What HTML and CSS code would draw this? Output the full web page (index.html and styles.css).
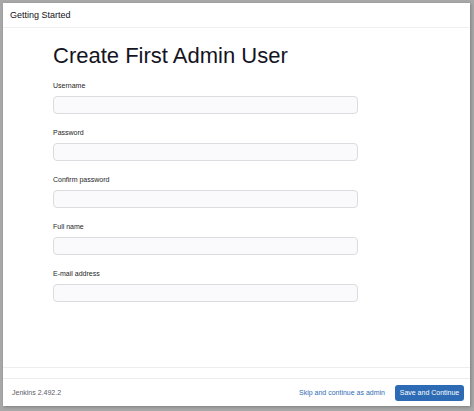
FILE: index.html
```html
<!DOCTYPE html>
<html>
<head>
<meta charset="utf-8">
<link rel="stylesheet" href="styles.css">
</head>
<body>
<div class="dialog">
  <div class="header">Getting Started</div>
  <div class="content">
    <h1 class="title">Create First Admin User</h1>
    <div class="field">
      <label class="label">Username</label>
      <input class="input" type="text">
    </div>
    <div class="field">
      <label class="label">Password</label>
      <input class="input" type="password">
    </div>
    <div class="field">
      <label class="label">Confirm password</label>
      <input class="input" type="password">
    </div>
    <div class="field">
      <label class="label">Full name</label>
      <input class="input" type="text">
    </div>
    <div class="field">
      <label class="label">E-mail address</label>
      <input class="input" type="text">
    </div>
  </div>
  <div class="spacer"></div>
  <div class="footer">
    <span class="version">Jenkins 2.492.2</span>
    <div class="actions">
      <a class="skip">Skip and continue as admin</a>
      <button class="save">Save and Continue</button>
    </div>
  </div>
</div>
</body>
</html>
```
FILE: styles.css
```css
html, body {
  margin: 0;
  padding: 0;
  height: 100%;
}
body {
  background: #a8a8a8;
  font-family: "Liberation Sans", Arial, sans-serif;
  color: #14141f;
  padding: 3px 4px 5px 3px;
  box-sizing: border-box;
}
.dialog {
  width: 467px;
  height: 403px;
  background: #fff;
  display: flex;
  flex-direction: column;
  box-shadow: 1px 1px 3px rgba(0,0,0,0.25);
}
.header {
  height: 25px;
  box-sizing: border-box;
  padding: 0 7px;
  display: flex;
  align-items: center;
  font-size: 9px;
  font-weight: 400;
  color: #111118;
  border-bottom: 1px solid #f0f0f2;
  flex: none;
}
.content {
  height: 340px;
  box-sizing: border-box;
  padding: 15px 0 0 50px;
  border-bottom: 1px solid #ededef;
  flex: none;
}
.title {
  margin: 0 0 12px;
  font-size: 22px;
  line-height: 26px;
  font-weight: 400;
  color: #14141f;
}
.field {
  display: flex;
  flex-direction: column;
  margin-bottom: 14px;
}
.label {
  font-size: 7px;
  line-height: 10px;
  font-weight: 400;
  color: #1e1e26;
  margin-bottom: 5px;
}
.input {
  width: 305px;
  height: 18px;
  box-sizing: border-box;
  border: 1px solid #dcdce0;
  border-radius: 4px;
  background: #fafafc;
  margin: 0;
  padding: 0;
}
.spacer {
  height: 10px;
  flex: none;
}
.footer {
  flex: 1;
  border-top: 1px solid #ededef;
  display: flex;
  align-items: center;
  justify-content: space-between;
  padding: 0 6px 0 9px;
}
.version {
  font-size: 7px;
  color: #5c5c66;
}
.actions {
  display: flex;
  align-items: center;
  gap: 10px;
}
.skip {
  font-size: 7px;
  color: #2f6db3;
}
.save {
  height: 16px;
  width: 69px;
  padding: 0;
  border: none;
  border-radius: 3px;
  background: #2d6cb5;
  color: #fff;
  font-family: "Liberation Sans", Arial, sans-serif;
  font-size: 7px;
  font-weight: 400;
}
```
